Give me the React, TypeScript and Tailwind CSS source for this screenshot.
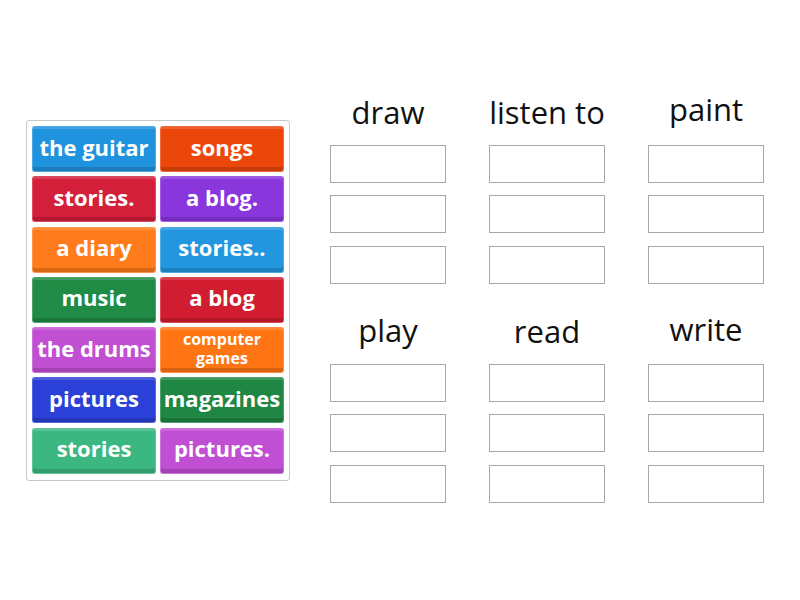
import React from "react";

type Tile = { label: string; bg: string; small?: boolean };

const tiles: Tile[] = [
  { label: "the guitar", bg: "bg-[#2093de]" },
  { label: "songs", bg: "bg-[#ec470b]" },
  { label: "stories.", bg: "bg-[#d31f3a]" },
  { label: "a blog.", bg: "bg-[#8a36dd]" },
  { label: "a diary", bg: "bg-[#ff7b1b]" },
  { label: "stories..", bg: "bg-[#2297e0]" },
  { label: "music", bg: "bg-[#1f8b45]" },
  { label: "a blog", bg: "bg-[#d21d30]" },
  { label: "the drums", bg: "bg-[#c14fd1]" },
  { label: "computer games", bg: "bg-[#ff7514]", small: true },
  { label: "pictures", bg: "bg-[#2a40d6]" },
  { label: "magazines", bg: "bg-[#1f8743]" },
  { label: "stories", bg: "bg-[#3bb882]" },
  { label: "pictures.", bg: "bg-[#c14fd3]" },
];

const groups = [
  ["draw", "listen to", "paint"],
  ["play", "read", "write"],
];

// small per-heading nudges, the reference centres each word on its own glyphs
const nudge: Record<string, string> = {
  paint: "-mt-[3px] mb-[3px]",
  play: "-mt-[1px] mb-[1px]",
  read: "",
  write: "-mt-[2px] mb-[2px]",
};

const App = () => {
  return (
    <div
      className="w-[800px] h-[600px] bg-white flex items-start"
      style={{ fontFamily: '"Open Sans", "Liberation Sans", sans-serif' }}
    >
      <div className="ml-[26px] mt-[120px] w-[264px] border border-[#c8c8c8] rounded-[3px] p-[5px] pb-[6px] grid grid-cols-2 gap-x-[4px] gap-y-[4.3px]">
        {tiles.map((t) => (
          <div
            key={t.label}
            className={`${t.bg} h-[46px] rounded-[3px] flex items-center justify-center text-center text-white font-bold border border-white/20 shadow-[inset_0_2px_0_rgba(255,255,255,0.15),inset_0_-4px_0_rgba(0,0,0,0.15)] ${
              t.small ? "text-[16px] leading-[19px] px-4" : "text-[22px] leading-none"
            }`}
          >
            <span className={t.small ? "pb-[2px]" : "pb-[5px]"}>{t.label}</span>
          </div>
        ))}
      </div>

      <div className="ml-[40px] mt-[92px] flex flex-col gap-[27px]">
        {groups.map((g, gi) => (
          <div key={gi} className="flex gap-[43px]">
            {g.map((word) => (
              <div key={word} className="w-[116px] flex flex-col">
                <div
                  className={`h-[40px] text-[31px] leading-[40px] text-center text-[#111] whitespace-nowrap ${nudge[word] ?? ""}`}
                >
                  {word}
                </div>
                <div className="mt-[13px] flex flex-col gap-[12.4px]">
                  {[0, 1, 2].map((i) => (
                    <div key={i} className="h-[38px] border border-[#a8a8a8] bg-white" />
                  ))}
                </div>
              </div>
            ))}
          </div>
        ))}
      </div>
    </div>
  );
};

export default App;
